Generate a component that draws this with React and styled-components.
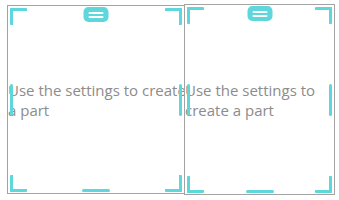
import React from "react";
import styled, { createGlobalStyle } from "styled-components";

const GlobalStyle = createGlobalStyle`
  html, body {
    margin: 0;
    padding: 0;
    background: #ffffff;
  }
`;

const ACCENT = "#5dd6dc";

const Row = styled.div`
  display: flex;
  align-items: flex-start;
  padding: 4px 0 0 7px;
`;

const Panel = styled.div`
  position: relative;
  box-sizing: border-box;
  width: ${p => p.w}px;
  height: ${p => p.h}px;
  margin-top: ${p => p.offset || 0}px;
  margin-left: ${p => (p.overlap ? -1 : 0)}px;
  border: 1px solid #a3a3a3;
  background: #ffffff;
  display: flex;
  align-items: center;
`;

const Message = styled.p`
  margin: 0 -8px 0 0;
  font-family: "Open Sans", "Noto Sans", sans-serif;
  font-size: 15px;
  line-height: 20px;
  color: #8c8c8c;
  text-align: left;
`;

const Corner = styled.span`
  position: absolute;
  width: 14px;
  height: 14px;
  ${p => (p.top ? "top: 2px;" : "bottom: 1px;")}
  ${p => (p.left ? "left: 2px;" : "right: 2px;")}
  border-color: ${ACCENT};
  border-style: solid;
  border-width: ${p =>
    `${p.top ? 3 : 0}px ${p.left ? 0 : 3}px ${p.top ? 0 : 3}px ${
      p.left ? 3 : 0
    }px`};
  border-radius: 1px;
`;

const Grip = styled.span`
  position: absolute;
  top: 1px;
  left: 50%;
  transform: translateX(-50%);
  width: 25px;
  height: 15px;
  border-radius: 5px;
  background: ${ACCENT};
  display: flex;
  flex-direction: column;
  align-items: center;
  justify-content: center;
  gap: 2px;
  span {
    width: 15px;
    height: 2px;
    border-radius: 1px;
    background: #ffffff;
  }
`;

const BottomBar = styled.span`
  position: absolute;
  bottom: 1px;
  left: 50%;
  transform: translateX(-50%);
  width: 28px;
  height: 3px;
  border-radius: 2px;
  background: ${ACCENT};
`;

const SideBar = styled.span`
  position: absolute;
  top: 50%;
  ${p => (p.left ? "left: 2px;" : "right: 2px;")}
  transform: translateY(-50%);
  width: 3px;
  height: 32px;
  border-radius: 2px;
  background: ${ACCENT};
`;

const PartPanel = ({ w, h, offset, overlap }) => (
  <Panel w={w} h={h} offset={offset} overlap={overlap}>
    <SideBar left />
    <SideBar />
    <Message>Use the settings to create a part</Message>
    <Corner top left />
    <Corner top />
    <Corner left />
    <Corner />
    <Grip>
      <span />
      <span />
    </Grip>
    <BottomBar />
  </Panel>
);

export default function App() {
  return (
    <>
      <GlobalStyle />
      <Row>
        <PartPanel w={178} h={189} offset={1} />
        <PartPanel w={151} h={191} overlap />
      </Row>
    </>
  );
}
